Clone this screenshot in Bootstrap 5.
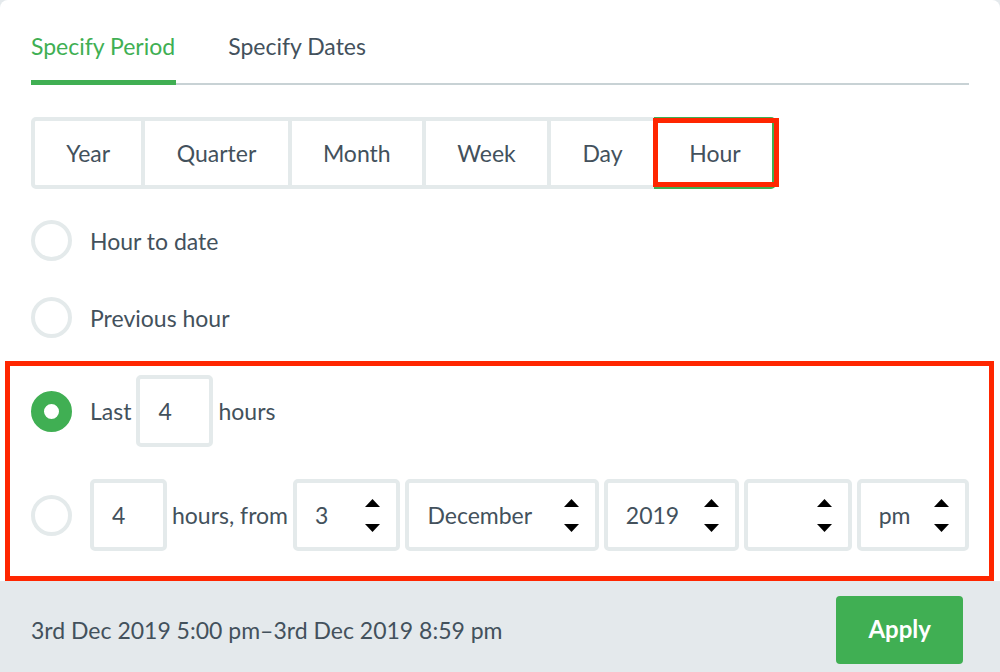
<!DOCTYPE html>
<html lang="en">
<head>
<meta charset="utf-8">
<meta name="viewport" content="width=device-width, initial-scale=1">
<title>Select period</title>
<link href="https://cdn.jsdelivr.net/npm/bootstrap@5.3.0/dist/css/bootstrap.min.css" rel="stylesheet">
<style>
  :root { --ink: #43515c; --green: #40af53; --line: #e4eaeb; --mark: #ff2600; }
  body { font-family: Lato, sans-serif; font-size: 23px; line-height: 32px; color: var(--ink); background: #e4e9ec; }
  .panel-body { background: #fff; border-radius: 8px 8px 0 0; padding-top: 30px; }
  .inset { margin: 0 31px; }
  .period-tabs { border-bottom: 2px solid #c8d2d5; gap: 52px; }
  .period-tabs .nav-link { padding: 0 1px 18px 0; color: var(--ink); border-bottom: 5px solid transparent; margin-bottom: -2px; line-height: 32px; }
  .period-tabs .nav-link.active { color: var(--green); border-color: var(--green); }
  .units { margin-top: 32px; margin-bottom: 31px; max-width: 745px; }
  .units .btn { flex-grow: 1; font-size: 23px; line-height: 32px; color: var(--ink); background: #fff; border: 4px solid var(--line); border-radius: 0; padding: 16px 30px; }
  .units .btn:first-child { border-radius: 5px 0 0 5px; }
  .units .btn + .btn, .units .marked { margin-left: -4px; }
  .units .marked { position: relative; display: flex; flex-grow: 1; }
  .units .marked .btn { border-color: var(--green); border-radius: 0 5px 5px 0; }
  .units .marked::after { content: ""; position: absolute; inset: 1px -3px 2px -1px; border: 5px solid var(--mark); pointer-events: none; }
  .choice { display: flex; align-items: center; gap: 18px; }
  .choice .form-check-input { width: 41px; height: 41px; margin: 0; border: 4px solid var(--line); flex: none; background-color: #fff; }
  .choice .form-check-input:checked { border: 13px solid var(--green); background: #fff; }
  .choices { gap: 36px; margin-bottom: 23px; }
  .marked-area { border: 5px solid var(--mark); margin: 0 6px 0 5px; padding: 9px 20px 25px 21px; gap: 32px; }
  .fields { gap: 5px; min-width: 0; }
  .fields .form-control, .fields .form-select { height: 72px; font-size: 23px; line-height: 32px; color: var(--ink); border: 4px solid var(--line); border-radius: 5px; padding: 0 18px; }
  .fields .form-control { width: 77px; flex: none; }
  .fields .form-select { min-width: 0; background-position: right 16px center; background-size: 15px 33px;
    background-image: url("data:image/svg+xml,%3Csvg xmlns='http://www.w3.org/2000/svg' viewBox='0 0 15 33'%3E%3Cpath d='M0 8L7.5 0L15 8zM0 25L7.5 33L15 25z'/%3E%3C/svg%3E"); }
  .w-date { flex: 1 1 107px; }
  .w-month { flex: 1 1 193px; }
  .w-year { flex: 1 1 135px; }
  .w-half { flex: 1 1 112px; }
  .panel-foot { padding: 15px 37px 8px 31px; }
  .btn-apply { font-size: 24px; line-height: 32px; font-weight: 700; color: #fff; background: var(--green); border: 0; border-radius: 4px; padding: 17px 32px 19px; }
</style>
</head>
<body>
<form onsubmit="return false">
  <main class="panel-body">
    <nav class="nav period-tabs inset">
      <a class="nav-link active" href="#period" aria-current="page">Specify Period</a>
      <a class="nav-link" href="#dates">Specify Dates</a>
    </nav>
    <div class="units inset d-flex" role="group" aria-label="Period unit">
      <button type="button" class="btn">Year</button>
      <button type="button" class="btn">Quarter</button>
      <button type="button" class="btn">Month</button>
      <button type="button" class="btn">Week</button>
      <button type="button" class="btn">Day</button>
      <div class="marked"><button type="button" class="btn" aria-pressed="true">Hour</button></div>
    </div>
    <div class="choices inset d-flex flex-column">
      <div class="choice">
        <input class="form-check-input" type="radio" name="range" id="to-date">
        <label for="to-date">Hour to date</label>
      </div>
      <div class="choice">
        <input class="form-check-input" type="radio" name="range" id="previous">
        <label for="previous">Previous hour</label>
      </div>
    </div>
    <div class="marked-area d-flex flex-column">
      <div class="choice">
        <input class="form-check-input" type="radio" name="range" id="last" checked>
        <div class="fields d-flex align-items-center">
          <label for="last">Last</label>
          <input class="form-control" type="text" value="4" id="last-count">
          <label for="last-count">hours</label>
        </div>
      </div>
      <div class="choice">
        <input class="form-check-input" type="radio" name="range" id="from" aria-label="Hours from a date">
        <div class="fields d-flex align-items-center flex-grow-1">
          <input class="form-control" type="text" value="4" id="from-count">
          <label for="from-count" class="text-nowrap">hours, from</label>
          <select class="form-select w-date" aria-label="Day"><option>3</option></select>
          <select class="form-select w-month" aria-label="Month"><option>December</option></select>
          <select class="form-select w-year" aria-label="Year"><option>2019</option></select>
          <select class="form-select w-date" aria-label="Hour"><option></option></select>
          <select class="form-select w-half" aria-label="am or pm"><option>pm</option></select>
        </div>
      </div>
    </div>
  </main>
  <footer class="panel-foot d-flex align-items-center justify-content-between">
    <span>3rd Dec 2019 5:00 pm–3rd Dec 2019 8:59 pm</span>
    <button type="submit" class="btn btn-apply">Apply</button>
  </footer>
</form>
<script src="https://cdn.jsdelivr.net/npm/bootstrap@5.3.0/dist/js/bootstrap.bundle.min.js"></script>
</body>
</html>
